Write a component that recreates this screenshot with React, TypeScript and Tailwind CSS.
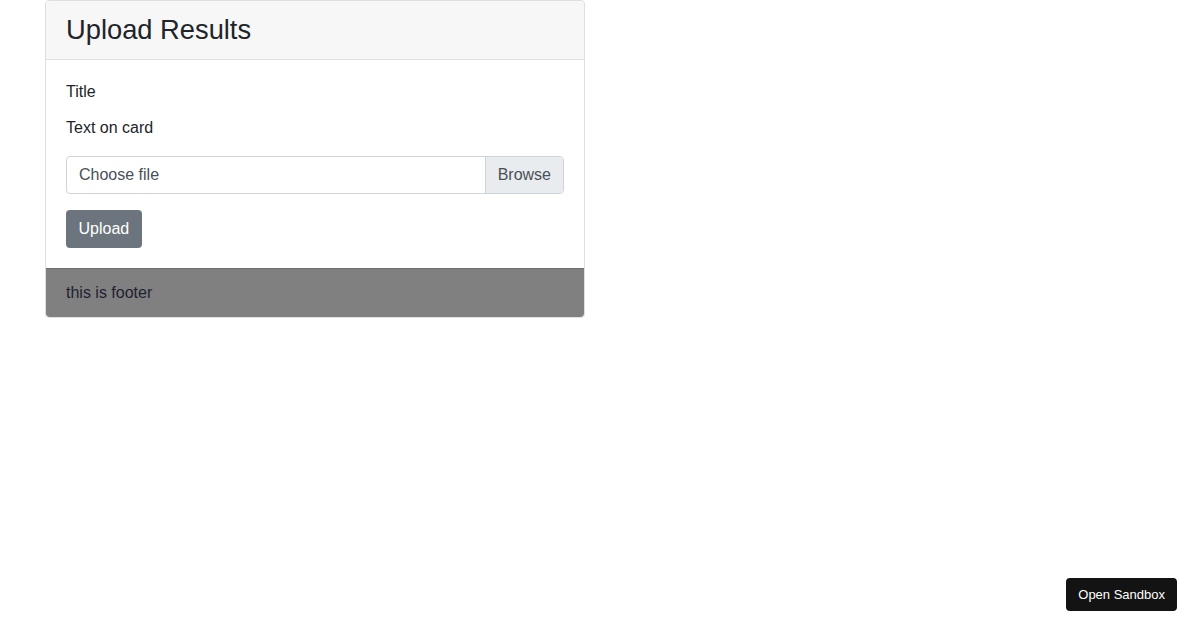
export default function App() {
  return (
    <div className="min-h-screen bg-white font-['Liberation_Sans',Arial,sans-serif] text-[#212529]">
      <div className="ml-[45px] w-[540px] rounded border border-[#dfdfdf] bg-white">
        <div className="border-b border-[#dfdfdf] bg-[#f7f7f7] px-5 py-3 rounded-t">
          <h3 className="text-[27.3px] leading-[33.6px]">Upload Results</h3>
        </div>
        <div className="p-5">
          <p className="mb-3 text-base leading-6">Title</p>
          <p className="mb-4 text-base leading-6">Text on card</p>
          <div className="mb-4 flex h-[38px] rounded border border-[#ced4da] text-base">
            <div className="flex flex-1 items-center px-3 text-[#495057]">Choose file</div>
            <div className="flex items-center rounded-r border-l border-[#ced4da] bg-[#e9ecef] px-3 text-[#495057]">
              Browse
            </div>
          </div>
          <button className="h-[38px] rounded bg-[#6c757d] px-[12.5px] text-base text-white">Upload</button>
        </div>
        <div className="rounded-b border-t border-[#6f6f6f] bg-[#808080] px-5 py-3 text-base leading-6 text-[#1e1f33]">
          this is footer
        </div>
      </div>
      <button className="fixed bottom-[19px] right-[23px] h-[33px] rounded bg-[#131313] px-3 text-[13px] text-white">
        Open Sandbox
      </button>
    </div>
  );
}
